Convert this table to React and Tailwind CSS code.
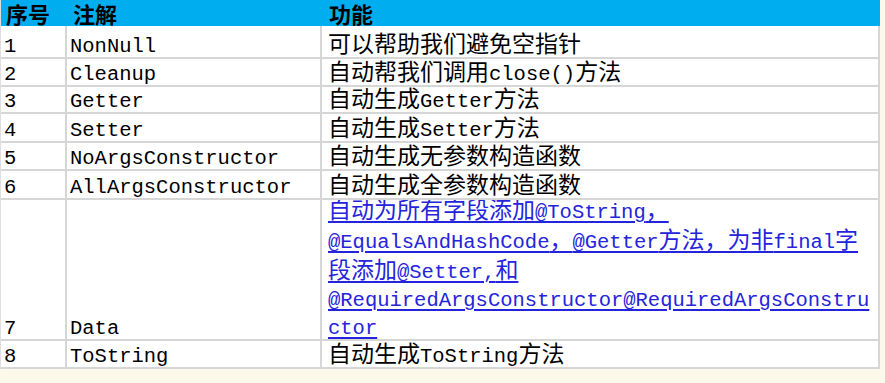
import React from "react";

const rows = [
  { no: "1", name: "NonNull", desc: "可以帮助我们避免空指针", h: "h-[33px]" },
  { no: "2", name: "Cleanup", desc: "自动帮我们调用close()方法", h: "h-[28px]" },
  { no: "3", name: "Getter", desc: "自动生成Getter方法", h: "h-[27px]" },
  { no: "4", name: "Setter", desc: "自动生成Setter方法", h: "h-[29px]" },
  { no: "5", name: "NoArgsConstructor", desc: "自动生成无参数构造函数", h: "h-[28px]" },
  { no: "6", name: "AllArgsConstructor", desc: "自动生成全参数构造函数", h: "h-[29px]" },
];

const dataLines = [
  "自动为所有字段添加@ToString，",
  "@EqualsAndHashCode，@Getter方法，为非final字",
  "段添加@Setter,和",
  "@RequiredArgsConstructor@RequiredArgsConstru",
  "ctor",
];

// latin in mono, CJK in a wider run, like the SimSun look of the sheet
function Mixed({ text }) {
  const parts = text.match(/[\u3000-\u9fff\uff00-\uffef]+|[^\u3000-\u9fff\uff00-\uffef]+/g) || [];
  return (
    <>
      {parts.map((p, i) =>
        /[\u3000-\u9fff\uff00-\uffef]/.test(p) ? (
          <span key={i} className="text-[23px] leading-none font-['Noto_Sans_CJK_SC',sans-serif]">{p}</span>
        ) : (
          <span key={i} className="text-[20.5px] leading-none font-['Liberation_Mono','Noto_Sans_CJK_SC',monospace]">{p}</span>
        )
      )}
    </>
  );
}

function Cell({ children, className = "" }) {
  return (
    <div className={`flex items-end border-r-2 border-b-2 border-[#d6d6d6] px-[3px] overflow-hidden ${className}`}>
      <div className="text-[20px] leading-[28px] mb-[-4px] whitespace-nowrap text-black">{children}</div>
    </div>
  );
}

export default function App() {
  return (
    <div className="w-[885px] h-[383px] bg-[#fdf9ea] font-['Liberation_Mono','Noto_Sans_CJK_SC',monospace]">
      <div className="w-[880px] bg-white border-l border-[#dedede]">
        <div className="grid grid-cols-[66px_255px_1fr] h-[26px] bg-[#00adef] font-bold text-[22px] leading-[27px] text-black font-['Noto_Sans_CJK_SC',sans-serif]">
          <div className="pl-[5px]">序号</div>
          <div className="pl-[6px]">注解</div>
          <div className="pl-[7px]">功能</div>
        </div>

        {rows.map((r) => (
          <div key={r.no} className={`grid grid-cols-[66px_255px_1fr] ${r.h}`}>
            <Cell><Mixed text={r.no} /></Cell>
            <Cell><Mixed text={r.name} /></Cell>
            <Cell className="pl-[6px]"><Mixed text={r.desc} /></Cell>
          </div>
        ))}

        <div className="grid grid-cols-[66px_255px_1fr] h-[141px]">
          <Cell><Mixed text="7" /></Cell>
          <Cell><Mixed text="Data" /></Cell>
          <Cell className="pl-[6px]">
            <div className="text-[#2424dc] underline decoration-[#2424dc] underline-offset-[3px]">
              {dataLines.map((l, i) => (
                <div key={i}><Mixed text={l} /></div>
              ))}
            </div>
          </Cell>
        </div>

        <div className="grid grid-cols-[66px_255px_1fr] h-[28px]">
          <Cell><Mixed text="8" /></Cell>
          <Cell><Mixed text="ToString" /></Cell>
          <Cell className="pl-[6px]"><Mixed text="自动生成ToString方法" /></Cell>
        </div>
      </div>
    </div>
  );
}
